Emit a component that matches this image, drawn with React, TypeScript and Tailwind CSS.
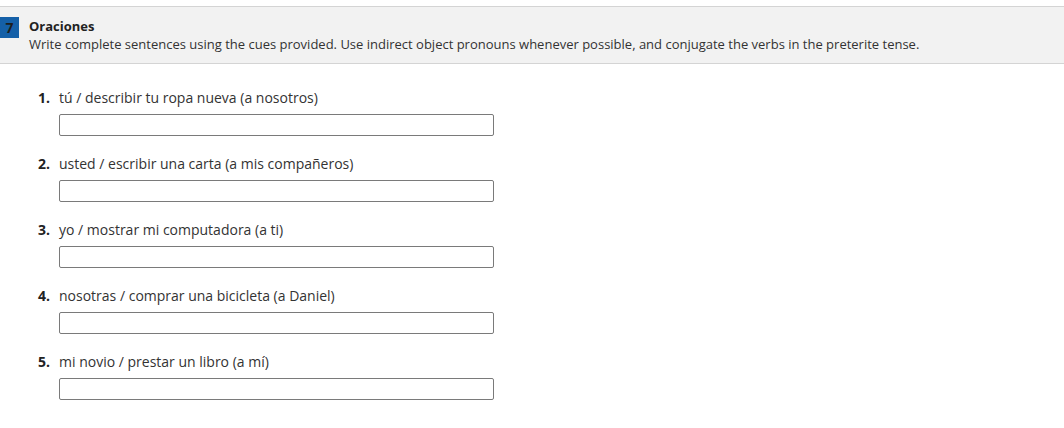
const items = [
  "tú / describir tu ropa nueva (a nosotros)",
  "usted / escribir una carta (a mis compañeros)",
  "yo / mostrar mi computadora (a ti)",
  "nosotras / comprar una bicicleta (a Daniel)",
  "mi novio / prestar un libro (a mí)",
];

export default function App() {
  return (
    <div
      className="min-h-[428px] w-[1064px] bg-white text-[#333]"
      style={{ fontFamily: '"Open Sans", sans-serif' }}
    >
      <div className="h-[6px]" />
      <header className="flex h-[58px] border-y border-[#d4d4d4] bg-[#f2f2f2]">
        <div className="mt-[10px] flex h-[21px] w-[19px] items-center justify-center bg-[#1560a8] text-[14px] font-bold text-[#1d1d1d]">
          7
        </div>
        <div className="ml-[10px] pt-[10px]">
          <h1 className="text-[13px] font-bold leading-[18px] text-[#222]">Oraciones</h1>
          <p className="text-[13px] leading-[18px] text-[#333]">
            Write complete sentences using the cues provided. Use indirect object pronouns whenever possible, and conjugate the verbs in the preterite tense.
          </p>
        </div>
      </header>
      <ol className="pl-[38px] pt-[24px]">
        {items.map((text, i) => (
          <li key={i} className="mb-[18px]">
            <div className="flex text-[14px] leading-[20px]">
              <span className="w-[21px] font-bold text-[#222]">{i + 1}.</span>
              <span>{text}</span>
            </div>
            <input
              type="text"
              className="ml-[21px] mt-[6px] block h-[22px] w-[435px] rounded-[2px] border border-[#7a7a7a] bg-white"
            />
          </li>
        ))}
      </ol>
    </div>
  );
}
